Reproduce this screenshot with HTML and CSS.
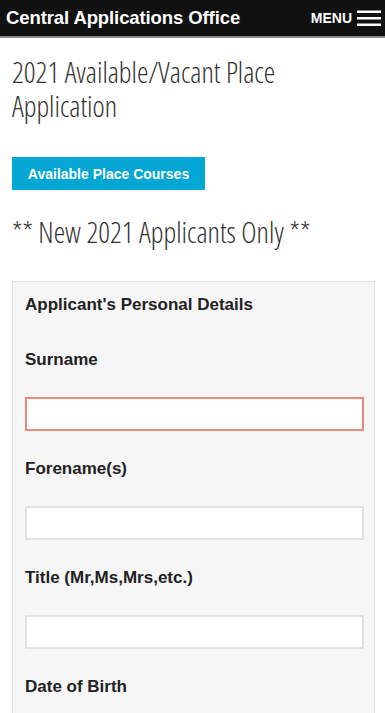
FILE: index.html
```html
<!DOCTYPE html>
<html>
<head>
<meta charset="utf-8">
<link rel="stylesheet" href="styles.css">
</head>
<body>
<header class="topbar">
  <div class="brand">Central Applications Office</div>
  <div class="menu">
    <span class="menu-label">MENU</span>
    <svg class="burger" width="24" height="20" viewBox="0 0 24 20">
      <rect x="0" y="2.5" width="24" height="2.5" fill="#fff"/>
      <rect x="0" y="9" width="24" height="2.5" fill="#fff"/>
      <rect x="0" y="15.5" width="24" height="2.5" fill="#fff"/>
    </svg>
  </div>
</header>
<main class="content">
  <h1 class="page-title">2021 Available/Vacant Place Application</h1>
  <a class="btn" href="#">Available Place Courses</a>
  <h2 class="subtitle">** New 2021 Applicants Only **</h2>
  <section class="panel">
    <div class="panel-title">Applicant's Personal Details</div>
    <div class="field">
      <label class="label">Surname</label>
      <input class="input input-error" type="text">
    </div>
    <div class="field">
      <label class="label">Forename(s)</label>
      <input class="input" type="text">
    </div>
    <div class="field">
      <label class="label">Title (Mr,Ms,Mrs,etc.)</label>
      <input class="input" type="text">
    </div>
    <div class="field">
      <label class="label">Date of Birth</label>
    </div>
  </section>
</main>
</body>
</html>
```

FILE: styles.css
```css
html, body {
  margin: 0;
  padding: 0;
  background: #fff;
}
body {
  font-family: "Liberation Sans", Arial, sans-serif;
  color: #222;
  overflow: hidden;
}
.topbar {
  height: 36px;
  background: #111;
  border-bottom: 2px solid #8a8a8a;
  display: flex;
  align-items: center;
  justify-content: space-between;
  padding: 0 4px 0 6px;
}
.brand {
  color: #fff;
  font-weight: bold;
  font-size: 18.5px;
  letter-spacing: -0.1px;
}
.menu {
  display: flex;
  align-items: center;
  gap: 5px;
}
.menu-label {
  color: #fff;
  font-weight: bold;
  font-size: 14px;
}
.burger {
  display: block;
}
.content {
  padding: 0 10px 0 12px;
}
.page-title {
  font-family: "Open Sans", sans-serif;
  font-stretch: 75%;
  font-weight: 300;
  font-size: 29px;
  line-height: 34px;
  color: #333;
  margin: 17px 0 34px;
}
.btn {
  display: flex;
  align-items: center;
  justify-content: center;
  width: 193px;
  height: 33px;
  background: #04a6d3;
  color: #fff;
  font-weight: bold;
  font-size: 14px;
  text-decoration: none;
}
.subtitle {
  font-family: "Open Sans", sans-serif;
  font-stretch: 75%;
  font-weight: 300;
  font-size: 29px;
  line-height: 34px;
  color: #333;
  margin: 25px 0 32px;
}
.panel {
  background: #f6f6f6;
  border: 1px solid #e2e2e2;
  padding: 13px 10px 20px 12px;
}
.panel-title, .label {
  display: block;
  font-weight: bold;
  font-size: 17px;
  line-height: 20px;
  color: #222;
}
.field {
  margin-top: 35px;
}
.field + .field {
  margin-top: 28px;
}
.label {
  margin-bottom: 27px;
}
.input {
  display: block;
  box-sizing: border-box;
  width: 100%;
  height: 34px;
  margin: 0;
  border: 2px solid #e2e2e2;
  background: #fff;
  outline: none;
}
.input-error {
  border-color: #eb8878;
}
```
